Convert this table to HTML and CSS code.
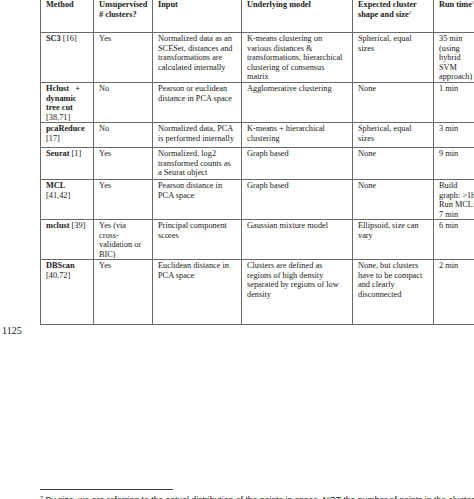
FILE: index.html
```html
<!DOCTYPE html>
<html>
<head>
<meta charset="utf-8">
<link rel="stylesheet" href="styles.css">
</head>
<body>
<div class="page">
<table class="methods">
<colgroup>
<col class="c1"><col class="c2"><col class="c3"><col class="c4"><col class="c5"><col class="c6">
</colgroup>
<tr class="r-head">
<th>Method</th>
<th>Unsupervised<br># clusters?</th>
<th>Input</th>
<th>Underlying model</th>
<th>Expected cluster<br>shape and size<sup>2</sup></th>
<th>Run time<sup>3</sup></th>
</tr>
<tr class="r-sc3">
<td><b>SC3</b> [16]</td>
<td>Yes</td>
<td>Normalized data as an<br>SCESet, distances and<br>transformations are<br>calculated internally</td>
<td>K-means clustering on<br>various distances &amp;<br>transformations, hierarchical<br>clustering of consensus<br>matrix</td>
<td>Spherical, equal<br>sizes</td>
<td>35 min<br>(using<br>hybrid<br>SVM<br>approach)</td>
</tr>
<tr class="r-hclust">
<td class="just"><b>Hclust&nbsp;&nbsp; +<br>dynamic<br>tree cut</b><br>[38,71]</td>
<td>No</td>
<td>Pearson or euclidean<br>distance in PCA space</td>
<td>Agglomerative clustering</td>
<td>None</td>
<td>1 min</td>
</tr>
<tr class="r-pca">
<td><b>pcaReduce</b><br>[17]</td>
<td>No</td>
<td>Normalized data, PCA<br>is performed internally</td>
<td>K-means + hierarchical<br>clustering</td>
<td>Spherical, equal<br>sizes</td>
<td>3 min</td>
</tr>
<tr class="r-seurat">
<td><b>Seurat</b> [1]</td>
<td>Yes</td>
<td>Normalized, log2<br>transformed counts as<br>a Seurat object</td>
<td>Graph based</td>
<td>None</td>
<td>9 min</td>
</tr>
<tr class="r-mcl">
<td><b>MCL</b><br>[41,42]</td>
<td>Yes</td>
<td>Pearson distance in<br>PCA space</td>
<td>Graph based</td>
<td>None</td>
<td>Build<br>graph: &gt;1h<br>Run MCL:<br>7 min</td>
</tr>
<tr class="r-mclust">
<td><b>mclust</b> [39]</td>
<td>Yes (via<br>cross-<br>validation or<br>BIC)</td>
<td>Principal component<br>scores</td>
<td>Gaussian mixture model</td>
<td>Ellipsoid, size can<br>vary</td>
<td>6 min</td>
</tr>
<tr class="r-dbscan">
<td><b>DBScan</b><br>[40,72]</td>
<td>Yes</td>
<td>Euclidean distance in<br>PCA space</td>
<td>Clusters are defined as<br>regions of high density<br>separated by regions of low<br>density</td>
<td>None, but clusters<br>have to be compact<br>and clearly<br>disconnected</td>
<td>2 min</td>
</tr>
</table>
<div class="lineno">1125</div>
<div class="footnotes">
<div class="fn-rule"></div>
<p class="fn-text"><sup>2</sup> By size, we are referring to the actual distribution of the points in space, NOT the number of points in the cluster</p>
</div>
</div>
</body>
</html>
```
FILE: styles.css
```css
html, body {
  margin: 0;
  padding: 0;
  background: #ffffff;
  overflow: hidden;
  width: 474px;
  height: 499px;
}
.page {
  width: 474px;
  height: 499px;
  overflow: hidden;
  font-family: "Liberation Serif", "Times New Roman", serif;
  color: #1a1a1a;
}
.methods {
  border-collapse: collapse;
  table-layout: fixed;
  width: 483px;
  margin: -2px 0 0 40px;
  font-size: 8.3px;
  line-height: 9.5px;
}
.methods col.c1 { width: 53px; }
.methods col.c2 { width: 59px; }
.methods col.c3 { width: 89px; }
.methods col.c4 { width: 111px; }
.methods col.c5 { width: 81px; }
.methods col.c6 { width: 90px; }
.methods th,
.methods td {
  border: 1px solid #6a6a6a;
  padding: 1px 5px 0 5px;
  vertical-align: top;
  text-align: left;
  white-space: nowrap;
  overflow: hidden;
}
.methods th { font-weight: bold; }
.methods b { font-weight: bold; }
.methods sup {
  font-size: 5px;
  line-height: 0;
  vertical-align: 3px;
  font-weight: normal;
}
.r-head { height: 34px; }
.r-sc3 { height: 50px; }
.r-hclust { height: 40px; }
.r-pca { height: 25px; }
.r-seurat { height: 32px; }
.r-mcl { height: 39px; }
.r-mclust { height: 39px; }
.r-dbscan { height: 65px; }
.lineno {
  font-size: 10px;
  line-height: 12px;
  padding-left: 2px;
  height: 12px;
}
.footnotes {
  margin: 152px 0 0 40px;
}
.fn-rule {
  width: 133px;
  height: 1px;
  background: #3a3a3a;
}
.fn-text {
  margin: 5px 0 0 0;
  font-family: "Liberation Sans", Arial, sans-serif;
  font-size: 8.7px;
  line-height: 10px;
  white-space: nowrap;
  color: #222;
}
.fn-text sup {
  font-size: 5.5px;
  line-height: 0;
  vertical-align: 3px;
}
```
